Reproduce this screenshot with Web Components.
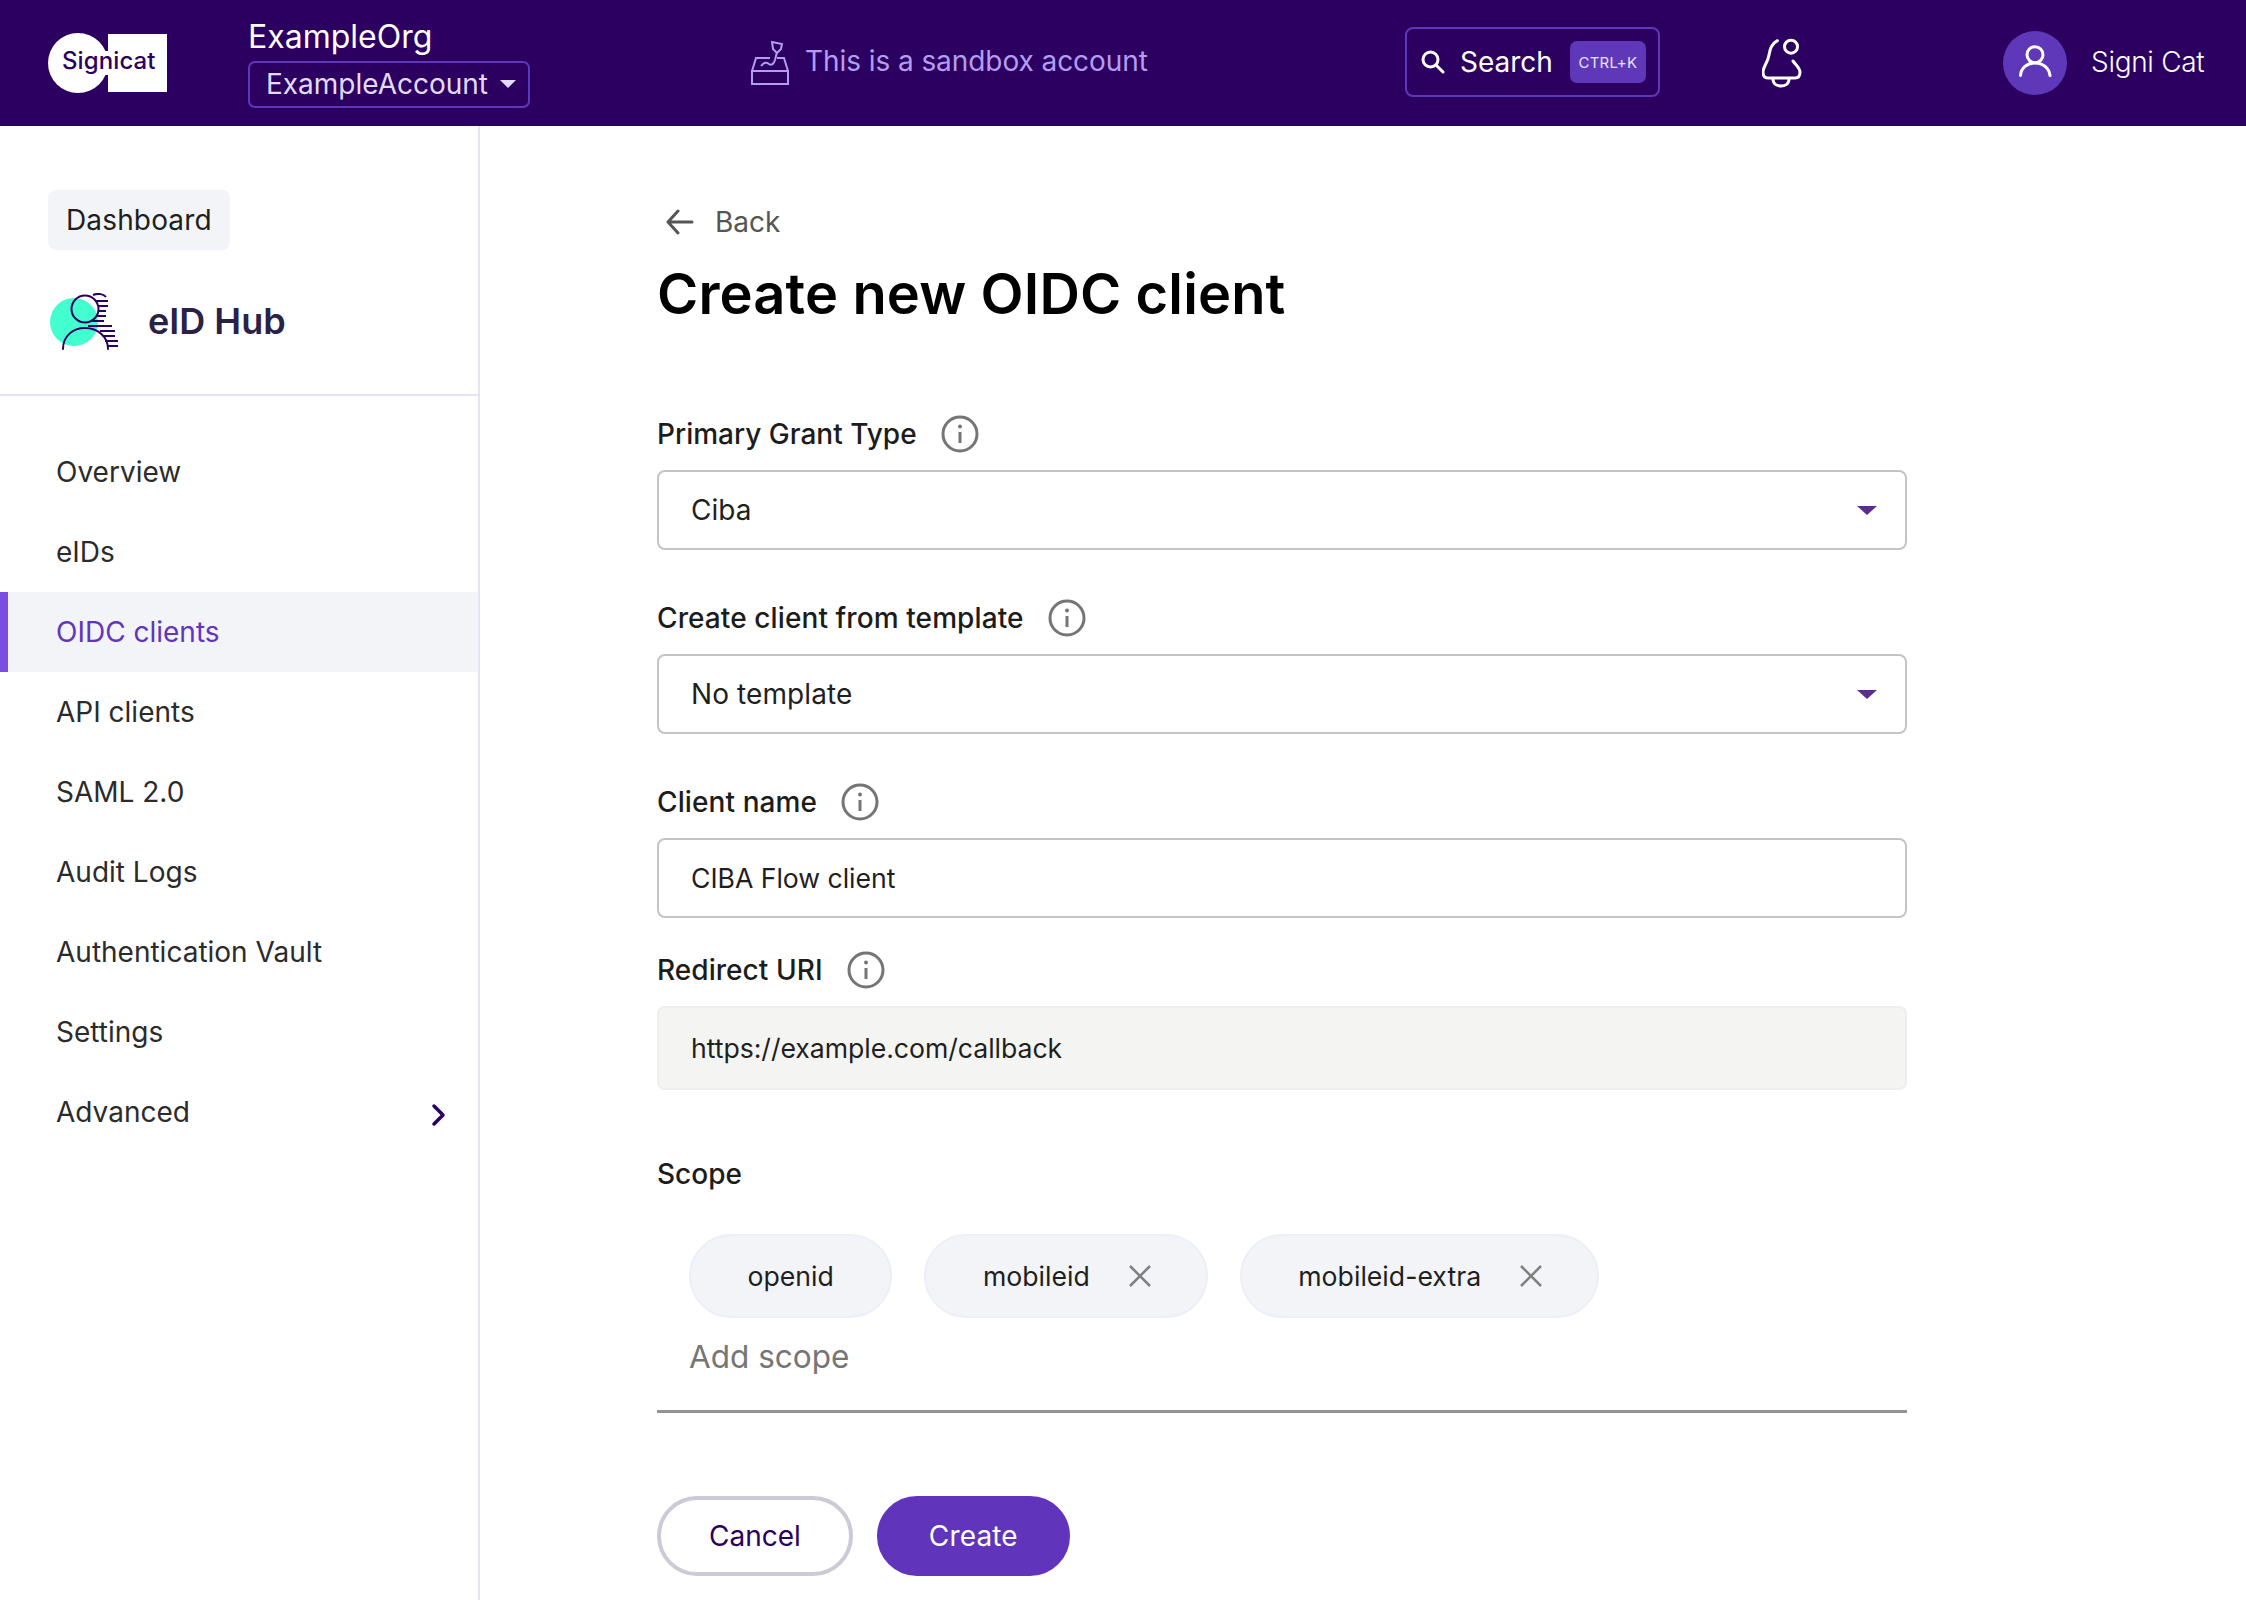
<!DOCTYPE html>
<html lang="en">
<head>
<meta charset="utf-8">
<title>Create new OIDC client</title>
<style>
    html, body { margin: 0; padding: 0; background: #fff; }
    body { font-family: Inter, "Liberation Sans", sans-serif; font-size: 28px; height: 1600px; overflow: hidden; }
    .page { display: flex; align-items: stretch; height: 1474px; }
</style>
</head>
<body>
<app-header></app-header>
<div class="page">
    <side-bar>
        <nav-item>Overview</nav-item>
        <nav-item>eIDs</nav-item>
        <nav-item active>OIDC clients</nav-item>
        <nav-item>API clients</nav-item>
        <nav-item>SAML 2.0</nav-item>
        <nav-item>Audit Logs</nav-item>
        <nav-item>Authentication Vault</nav-item>
        <nav-item>Settings</nav-item>
        <nav-item more>Advanced</nav-item>
    </side-bar>
    <client-form></client-form>
</div>

<script>
class AppHeader extends HTMLElement {
    constructor() {
        super();
        this.attachShadow({ mode: 'open' }).innerHTML = `
        <style>
        :host { display: flex; align-items: center; height: 126px; background: #2c0060; color: #fff; position: relative; }
        .logo { position: relative; width: 119px; height: 64px; margin-left: 48px; flex: none; }
        .logo svg { display: block; }
        .logo span { position: absolute; left: 14px; top: 16px; font-size: 24px; line-height: 28px; font-weight: 500; color: #2c0060; white-space: nowrap; letter-spacing: 0.1px; }
        .org { margin-left: 81px; width: 282px; flex: none; }
        .org-name { font-size: 32px; line-height: 36px; height: 42px; white-space: nowrap; }
        .account { display: flex; align-items: center; box-sizing: border-box; height: 47px; border: 2px solid #5f38b9; border-radius: 7px; padding: 0 12px 0 16px; color: #e3dcf8; font-size: 28px; white-space: nowrap; justify-content: space-between; }
        .account i { width: 0; height: 0; border: 8px solid transparent; border-top: 8px solid #e3dcf8; border-bottom: 0; }
        .sandbox { display: flex; align-items: center; margin-left: 221px; width: 654px; flex: none; color: #b39df0; }
        .sandbox span { margin-left: 16px; padding-bottom: 4px; font-size: 28px; letter-spacing: -0.07px; white-space: nowrap; font-weight: 400; }
        .search { display: flex; align-items: center; box-sizing: border-box; width: 255px; height: 70px; margin-bottom: 2px; border: 2px solid #5f38b9; border-radius: 8px; padding-left: 14px; flex: none; }
        .search span { margin-left: 15px; font-size: 28px; white-space: nowrap; }
        .search b { display: flex; align-items: center; justify-content: center; width: 76px; height: 42px; margin-left: 17px; background: #5f38b9; border-radius: 7px; font-size: 15px; font-weight: 400; color: #e8e2fa; letter-spacing: 0.2px; }
        .bell { display: block; margin-left: 102px; flex: none; }
        .avatar { display: flex; align-items: center; justify-content: center; width: 64px; height: 64px; border-radius: 50%; background: #5f38b9; margin-left: 201px; flex: none; }
        .user { margin-left: 24px; padding-bottom: 2px; white-space: nowrap; font-size: 28px; font-weight: 300; letter-spacing: -0.3px; }
        </style>
        <div class="logo">
            <svg width="119" height="64" viewBox="0 0 119 64">
                <rect x="60" y="3" width="59" height="58" fill="#fff"/>
                <circle cx="30" cy="32" r="31" fill="#2c0060"/>
                <circle cx="30" cy="32" r="30" fill="#fff"/>
                <rect x="50" y="20" width="20" height="24" fill="#fff"/>
            </svg>
            <span>Signicat</span>
        </div>
        <div class="org">
            <div class="org-name">ExampleOrg</div>
            <div class="account">ExampleAccount<i></i></div>
        </div>
        <div class="sandbox">
            <svg width="38" height="44" viewBox="0 0 38 44" fill="none" stroke="#b39df0" stroke-width="2">
                <rect x="1" y="30" width="36" height="13"/>
                <path d="M1 30 L5 17 H19 M26 17 H33 L37 30"/>
                <path d="M10 25 C13 21 16 21 18 23 C21 25 23 22 24 19 L26 11"/>
                <path d="M21 1 L31 3 L30 8 L26 12 L22 8 Z"/>
            </svg>
            <span>This is a sandbox account</span>
        </div>
        <div class="search">
            <svg width="24" height="24" viewBox="0 0 24 24" fill="none" stroke="#fff" stroke-width="3" stroke-linecap="round">
                <circle cx="9.5" cy="9.5" r="7.5"/>
                <path d="M15 15 L22 22"/>
            </svg>
            <span>Search</span>
            <b>CTRL+K</b>
        </div>
        <svg class="bell" width="40" height="50" viewBox="0 0 40 50" fill="none" stroke="#fff" stroke-width="3" stroke-linecap="round" stroke-linejoin="round">
            <circle cx="29" cy="8.7" r="6.5"/>
            <path d="M15.4 2.7 C9 6 8 12 7 17 C6 24 1 29 1 34 C1 38 3 40 6 40 H33 C36 40 38 38 38 34 C38 30 34 27 31 23"/>
            <path d="M11 41 C11 46 15 48 19 48 C23 48 27 46 27 41"/>
        </svg>
        <div class="avatar">
            <svg width="64" height="64" viewBox="0 0 64 64" fill="none" stroke="#fff" stroke-width="3" stroke-linecap="round">
                <circle cx="32" cy="23.7" r="8"/>
                <path d="M17.5 44.5 C18 37 24 32 32 32 C40 32 46 37 47 44.5"/>
            </svg>
        </div>
        <div class="user">Signi Cat</div>
        `;
    }
}
customElements.define('app-header', AppHeader);

class SideBar extends HTMLElement {
    constructor() {
        super();
        this.attachShadow({ mode: 'open' }).innerHTML = `
        <style>
        :host { display: block; box-sizing: border-box; width: 480px; flex: none; border-right: 2px solid #e8e2f5; color: #1f1f1f; }
        .top { padding: 64px 0 40px 48px; border-bottom: 2px solid #e8e2f5; }
        .dash { display: inline-flex; align-items: center; height: 60px; padding: 0 18px; background: #f3f4f8; border-radius: 8px; font-size: 28px; font-weight: 400; letter-spacing: 0.15px; }
        .hub { display: flex; align-items: center; height: 64px; margin-top: 40px; }
        .hub svg { display: block; flex: none; }
        .hub span { margin-left: 28px; padding-bottom: 2px; font-size: 36px; font-weight: 600; color: #2a2148; }
        nav { display: flex; flex-direction: column; padding-top: 36px; }
        </style>
        <div class="top">
            <div class="dash">Dashboard</div>
            <div class="hub">
                <svg width="72" height="58" viewBox="0 0 72 58" fill="none" stroke="#2c0060" stroke-width="2">
                    <circle cx="26" cy="29" r="24" fill="#43ffd0" stroke="none"/>
                    <circle cx="37" cy="16" r="13.5"/>
                    <path stroke-linecap="round" d="M15 56 C15 43 25 35 37 35 C50 35 60 44 60 56"/>
                    <path d="M45 2 C50 0 56 1 58 4 M47 8 H60 M50 13 H60 M50 18 H58 M49 23 H58 M44 28 H56 M40 33 H64 M52 38 H67 M55 43 H67 M57 48 H70 M59 53 H70"/>
                </svg>
                <span>eID Hub</span>
            </div>
        </div>
        <nav><slot></slot></nav>
        `;
    }
}
customElements.define('side-bar', SideBar);

class NavItem extends HTMLElement {
    constructor() {
        super();
        this.attachShadow({ mode: 'open' }).innerHTML = `
        <style>
        :host { display: flex; align-items: center; justify-content: space-between; box-sizing: border-box; height: 80px; padding: 0 32px 0 56px; font-size: 28px; position: relative; color: #2b2b2b; }
        :host([active]) { background: #f3f4f8; color: #6135bd; }
        :host([active])::before { content: ""; position: absolute; left: 0; top: 0; bottom: 0; width: 8px; background: #7a4fe0; }
        svg { display: none; margin-top: 6px; }
        :host([more]) svg { display: block; }
        </style>
        <slot></slot>
        <svg width="16" height="24" viewBox="0 0 16 24" fill="none" stroke="#2c0060" stroke-width="3.5" stroke-linecap="round" stroke-linejoin="round"><path d="M4 3 L13 12 L4 21"/></svg>
        `;
    }
}
customElements.define('nav-item', NavItem);

class FormField extends HTMLElement {
    constructor() {
        super();
        const info = this.hasAttribute('info') ? `
            <svg width="38" height="38" viewBox="0 0 38 38" fill="none" stroke="#757575">
                <circle cx="19" cy="19" r="17" stroke-width="3"/>
                <path d="M19 17 V28" stroke-width="3"/>
                <circle cx="19" cy="11.5" r="2" fill="#757575" stroke="none"/>
            </svg>` : '';
        this.attachShadow({ mode: 'open' }).innerHTML = `
        <style>
        :host { display: block; }
        label { display: flex; align-items: center; height: 40px; font-size: 28px; font-weight: 500; color: #1c1c1c; margin-bottom: 16px; white-space: nowrap; }
        svg { margin-left: 24px; flex: none; }
        </style>
        <label>${this.getAttribute('label')}${info}</label>
        <slot></slot>
        `;
    }
}
customElements.define('form-field', FormField);

class SelectBox extends HTMLElement {
    constructor() {
        super();
        this.attachShadow({ mode: 'open' }).innerHTML = `
        <style>
        :host { display: flex; align-items: center; justify-content: space-between; box-sizing: border-box; height: 80px; padding: 0 28px 0 32px; border: 2.5px solid #c4c4c4; border-radius: 8px; background: #fff; font-size: 28px; color: #1f1f1f; }
        :host([input]) { font-size: 26.67px; letter-spacing: -0.05px; }
        :host([readonly]) { height: 84px; background: #f4f4f2; border-color: #eeeeee; }
        i { width: 0; height: 0; border: 10px solid transparent; border-top: 9px solid #5b2d91; border-bottom: 0; }
        </style>
        <slot></slot>
        ${this.hasAttribute('caret') ? '<i></i>' : ''}
        `;
    }
}
customElements.define('select-box', SelectBox);

class ScopeChip extends HTMLElement {
    constructor() {
        super();
        const close = this.hasAttribute('removable') ? `
            <svg width="24" height="24" viewBox="0 0 24 24" fill="none" stroke="#808080" stroke-width="2.5"><path d="M2 2 L22 22 M22 2 L2 22"/></svg>` : '';
        this.attachShadow({ mode: 'open' }).innerHTML = `
        <style>
        :host { display: inline-flex; align-items: center; box-sizing: border-box; height: 84px; padding: 0 56.5px; border: 2px solid #eeeef8; border-radius: 42px; background: #f3f4f8; font-size: 26.67px; color: #1f1f1f; white-space: nowrap; }
        :host([removable]) { padding-right: 54px; }
        svg { margin-left: 38px; flex: none; }
        </style>
        <slot></slot>${close}
        `;
    }
}
customElements.define('scope-chip', ScopeChip);

class PillButton extends HTMLElement {
    constructor() {
        super();
        this.attachShadow({ mode: 'open' }).innerHTML = `
        <style>
        :host { display: inline-flex; align-items: center; justify-content: center; box-sizing: border-box; height: 80px; padding: 0 48px; border: 4px solid #cccad6; border-radius: 40px; background: #fff; color: #2c0060; font-size: 28px; font-weight: 400; }
        :host([primary]) { background: #6035bb; border-color: #6035bb; color: #fff; letter-spacing: 0.15px; }
        </style>
        <slot></slot>
        `;
    }
}
customElements.define('pill-button', PillButton);

class ClientForm extends HTMLElement {
    constructor() {
        super();
        this.attachShadow({ mode: 'open' }).innerHTML = `
        <style>
        :host { display: flex; flex-direction: column; width: 1250px; margin-left: 177px; padding-top: 76px; flex: none; }
        .back { display: flex; align-items: center; height: 40px; margin-left: 9px; color: #555; font-size: 28px; }
        .back span { margin-left: 21px; }
        h1 { margin: 16px 0 84px; font-size: 56px; line-height: 72px; font-weight: 600; color: #000; white-space: nowrap; letter-spacing: 0.13px; }
        .gap48 { margin-top: 48px; }
        .chips { display: flex; gap: 32px; margin-top: 40px; padding-left: 32px; }
        .add { padding: 19px 0 0 32px; box-sizing: border-box; height: 95px; font-size: 31.5px; line-height: 40px; color: #757575; border-bottom: 3px solid #939393; }
        .buttons { display: flex; gap: 24px; margin-top: 83px; }
        </style>
        <div class="back">
            <svg width="28" height="28" viewBox="0 0 28 28" fill="none" stroke="#555" stroke-width="3" stroke-linecap="round" stroke-linejoin="round"><path d="M26 14 H2 M12 3 L2 14 L12 25"/></svg>
            <span>Back</span>
        </div>
        <h1>Create new OIDC client</h1>
        <form-field label="Primary Grant Type" info><select-box caret>Ciba</select-box></form-field>
        <form-field class="gap48" style="letter-spacing:0.1px" label="Create client from template" info><select-box caret>No template</select-box></form-field>
        <form-field class="gap48" style="letter-spacing:0.1px" label="Client name" info><select-box input>CIBA Flow client</select-box></form-field>
        <form-field style="margin-top:32px;letter-spacing:0.05px" label="Redirect URI" info><select-box input readonly>https://example.com/callback</select-box></form-field>
        <form-field style="margin-top:64px" label="Scope">
            <div class="chips">
                <scope-chip>openid</scope-chip>
                <scope-chip removable>mobileid</scope-chip>
                <scope-chip removable>mobileid-extra</scope-chip>
            </div>
            <div class="add">Add scope</div>
        </form-field>
        <div class="buttons">
            <pill-button>Cancel</pill-button>
            <pill-button primary>Create</pill-button>
        </div>
        `;
    }
}
customElements.define('client-form', ClientForm);
</script>
</body>
</html>
